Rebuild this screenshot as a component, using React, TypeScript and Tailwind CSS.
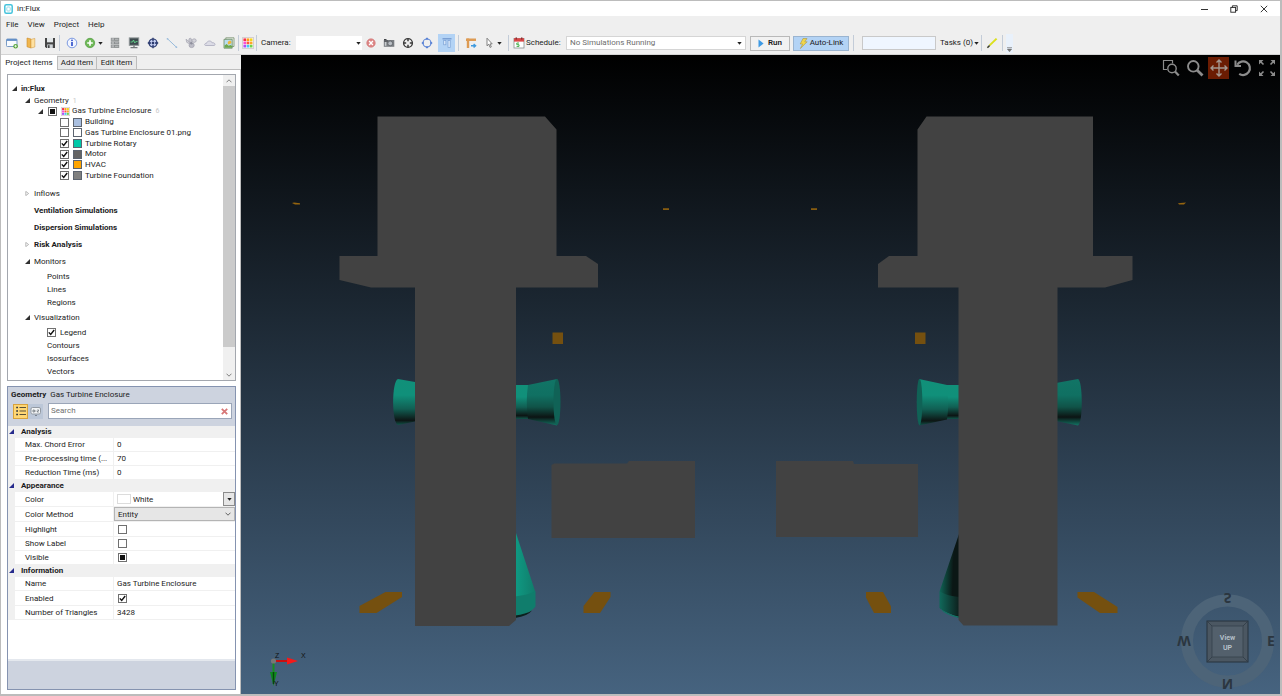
import { useEffect, useRef, type ReactNode } from "react";

function Glyph({ children, className = "" }: { children: ReactNode; className?: string }) {
  return (
    <svg viewBox="0 0 12 12" className={`size-3 shrink-0 ${className}`} fill="none" aria-hidden="true">
      {children}
    </svg>
  );
}

const buttonWidths = { narrow: "w-[17px]", normal: "w-[19px]", wide: "w-6 gap-0.5" };

function ToolButton({ label, children, size = "normal" }: { label: string; children: ReactNode; size?: keyof typeof buttonWidths }) {
  return (
    <button
      type="button"
      aria-label={label}
      className={`flex h-[18px] shrink-0 items-center justify-center ${buttonWidths[size]}`}
    >
      {children}
    </button>
  );
}

function Separator({ className = "" }: { className?: string }) {
  return <span className={`h-4 w-px shrink-0 bg-[#c3ccd8] ${className}`} />;
}

function Caret() {
  return (
    <svg viewBox="0 0 5 3" className="h-[3px] w-[5px] shrink-0" aria-hidden="true">
      <path d="M0.3 0H4.7L2.5 2.8Z" fill="#222" />
    </svg>
  );
}

const paletteColors = ["#f5304a", "#ff9c1a", "#f4d31c", "#fb4fd0", "#ff5a3c", "#ffa52a", "#b04ff5", "#43c8f5", "#6fd34a"];

function Palette() {
  return (
    <Glyph>
      <rect x="0.5" y="0.5" width="11" height="11" fill="#fff" stroke="#d5cfd2" />
      {paletteColors.map((color, i) => (
        <rect key={color} x={1.4 + (i % 3) * 3.2} y={1.4 + Math.floor(i / 3) * 3.2} width="2.7" height="2.7" fill={color} />
      ))}
    </Glyph>
  );
}

type CheckState = "on" | "off" | "mixed";

function Check({ id, label, state }: { id: string; label?: string; state: CheckState }) {
  const ref = useRef<HTMLInputElement>(null);
  useEffect(() => {
    if (ref.current) ref.current.indeterminate = state === "mixed";
  }, [state]);
  return (
    <span className="grid size-[9px] shrink-0">
      <input
        ref={ref}
        id={id}
        type="checkbox"
        aria-label={label}
        defaultChecked={state === "on"}
        className="peer col-start-1 row-start-1 m-0 size-[9px] appearance-none border border-[#707070] bg-white"
      />
      <svg viewBox="0 0 9 9" className="pointer-events-none col-start-1 row-start-1 hidden size-[9px] peer-checked:block" aria-hidden="true">
        <path d="M1.8 4.4L3.7 6.5L7.2 2" fill="none" stroke="#111" strokeWidth="1.4" />
      </svg>
      {state === "mixed" && (
        <svg viewBox="0 0 9 9" className="pointer-events-none col-start-1 row-start-1 size-[9px]" aria-hidden="true">
          <rect x="2" y="2" width="5" height="5" fill="#111" />
        </svg>
      )}
    </span>
  );
}

function TitleBar() {
  return (
    <header className="flex h-[15px] shrink-0 items-center bg-white pr-px pl-[3px]">
      <svg viewBox="0 0 9 10" className="h-2.5 w-[9px]" fill="none" aria-hidden="true">
        <rect x="0.8" y="0.8" width="7.4" height="8.4" rx="1.5" stroke="#45c3dc" strokeWidth="1.5" />
        <rect x="2.8" y="3" width="3.4" height="4" rx="1" stroke="#9adbe8" />
      </svg>
      <h1 className="ml-1">in:Flux</h1>
      <div className="ml-auto flex">
        <button type="button" aria-label="Minimize" className="flex h-[15px] w-[30px] items-center justify-center">
          <svg viewBox="0 0 8 8" className="size-2"><path d="M1 4.5H8" stroke="#333" /></svg>
        </button>
        <button type="button" aria-label="Restore" className="flex h-[15px] w-[30px] items-center justify-center">
          <svg viewBox="0 0 8 8" className="size-2" fill="none" stroke="#222" strokeWidth="0.9">
            <rect x="0.8" y="2.4" width="4.8" height="4.8" />
            <path d="M2.4 2.4V0.8H7.2V5.6H5.6" />
          </svg>
        </button>
        <button type="button" aria-label="Close" className="flex h-[15px] w-[30px] items-center justify-center">
          <svg viewBox="0 0 8 8" className="size-2"><path d="M0.8 0.8L7.2 7.2M7.2 0.8L0.8 7.2" stroke="#222" strokeWidth="0.9" /></svg>
        </button>
      </div>
    </header>
  );
}

function MenuBar() {
  return (
    <nav className="flex h-[17px] shrink-0 items-center gap-[9px] bg-[#efefef] pt-px pl-[5px]">
      {["File", "View", "Project", "Help"].map((item) => (
        <button key={item} type="button">{item}</button>
      ))}
    </nav>
  );
}

function Toolbar() {
  return (
    <div className="flex h-[22px] shrink-0 items-center border-b border-[#d4d4d4] bg-[#efefef] pb-px pl-px">
      <ToolButton label="New project">
        <Glyph>
          <rect x="0.5" y="2" width="10.5" height="7.5" rx="0.8" fill="#f8fbff" stroke="#7a9cc6" />
          <path d="M0.8 3H10.8" stroke="#4d7fc0" strokeWidth="1.6" />
          <circle cx="9.6" cy="9.2" r="2.3" fill="#57a639" />
          <path d="M9.6 7.9V10.5M8.3 9.2H10.9" stroke="#fff" strokeWidth="0.8" />
        </Glyph>
      </ToolButton>
      <ToolButton label="Open project">
        <Glyph>
          <path d="M2 1L6 2V11L2 9.8Z" fill="#f0b64e" stroke="#c98a28" strokeWidth="0.6" />
          <path d="M6 2.4L9.8 1.4V10L6 11Z" fill="#ffe1a0" stroke="#d3a04c" strokeWidth="0.6" />
        </Glyph>
      </ToolButton>
      <ToolButton label="Save project">
        <Glyph>
          <path d="M1 1H11V11H2.2L1 9.8Z" fill="#454545" />
          <rect x="3" y="1" width="6" height="4.3" fill="#e4e8ea" />
          <rect x="3.2" y="7.4" width="5.6" height="3.6" fill="#cfd4d8" />
          <rect x="4" y="8.2" width="1.6" height="2.8" fill="#454545" />
        </Glyph>
      </ToolButton>
      <Separator className="mr-0.5" />
      <ToolButton label="Information">
        <Glyph>
          <circle cx="6" cy="6" r="4.8" fill="#f1f5ff" stroke="#6e8fdc" strokeWidth="0.9" />
          <path d="M6 5V9" stroke="#2748c8" strokeWidth="1.6" />
          <circle cx="6" cy="3.3" r="0.9" fill="#2748c8" />
        </Glyph>
      </ToolButton>
      <ToolButton label="Add" size="wide">
        <Glyph>
          <circle cx="6" cy="6" r="4.7" fill="#6fb957" stroke="#4f9a3d" strokeWidth="0.7" />
          <path d="M6 3.2V8.8M3.2 6H8.8" stroke="#fff" strokeWidth="1.7" />
        </Glyph>
        <Caret />
      </ToolButton>
      <ToolButton label="Server">
        <Glyph>
          {[0.8, 4.3, 7.8].map((y) => (
            <g key={y}>
              <rect x="1.8" y={y} width="8.4" height="3.1" fill="#8b8f90" />
              <path d={`M2.6 ${y + 1}H5M2.6 ${y + 2}H5M6 ${y + 1.5}H9.4`} stroke="#d6d9da" strokeWidth="0.6" />
            </g>
          ))}
        </Glyph>
      </ToolButton>
      <ToolButton label="Monitor">
        <Glyph>
          <rect x="1.3" y="0.9" width="9.4" height="7.4" fill="#3e4a4e" stroke="#8d9496" />
          <path d="M2.5 5H4.5L5.5 3L6.8 6L7.8 4.6H9.6" stroke="#62d48a" strokeWidth="0.9" />
          <path d="M6 8.4V10.4M2.5 10.6H9.5" stroke="#74797b" strokeWidth="1.4" />
        </Glyph>
      </ToolButton>
      <ToolButton label="Probe">
        <Glyph>
          <circle cx="6" cy="6" r="4" fill="#c5cff2" stroke="#25356b" strokeWidth="1.2" />
          <path d="M6 0.8V4.2M6 7.8V11.2M0.8 6H4.2M7.8 6H11.2" stroke="#25356b" strokeWidth="1.3" />
          <circle cx="6" cy="6" r="1.2" fill="#25356b" />
        </Glyph>
      </ToolButton>
      <ToolButton label="Line">
        <Glyph>
          <path d="M1.5 1.8L10.4 10.2" stroke="#8db4d8" strokeWidth="0.9" />
          <circle cx="1.5" cy="1.8" r="0.9" fill="#9dbddd" />
          <circle cx="10.4" cy="10.2" r="0.9" fill="#9dbddd" />
        </Glyph>
      </ToolButton>
      <ToolButton label="Fan">
        <Glyph>
          <path d="M6.3 6.5L1 2.2L1.8 5.4L4.6 6.8Z" fill="#d4d4da" stroke="#a0a1ad" strokeWidth="0.7" />
          <ellipse cx="5.2" cy="3.4" rx="1.4" ry="2.2" fill="#c6c6ce" stroke="#a0a1ad" strokeWidth="0.7" />
          <ellipse cx="9.2" cy="3.6" rx="2" ry="1.8" fill="#d4d4da" stroke="#a0a1ad" strokeWidth="0.7" />
          <ellipse cx="6.6" cy="8.2" rx="2.6" ry="2.4" fill="#bcbcc6" stroke="#a0a1ad" strokeWidth="0.7" />
          <circle cx="6.4" cy="6.2" r="1.2" fill="#8e8f9c" />
        </Glyph>
      </ToolButton>
      <ToolButton label="Cloud">
        <Glyph>
          <path d="M1.5 8.5C0 8 0.6 6.2 2.5 6.3C3.2 3.4 7.3 3.2 8.2 5.8C10.6 5.2 12 7.8 10.3 8.5Z" fill="#dcdce6" stroke="#a9a9bd" strokeWidth="0.8" />
        </Glyph>
      </ToolButton>
      <ToolButton label="Picture">
        <Glyph>
          <path d="M2.8 0.8H11V9.5H2.8Z" fill="#e9f0e9" stroke="#79906e" strokeWidth="0.8" />
          <path d="M1 2.3H9.2V11.2H1Z" fill="#b9ddef" stroke="#6b8a5d" strokeWidth="0.8" />
          <path d="M1.5 8.4L3.6 7L5.6 8.8L7.5 8L9 9V10.8H1.5Z" fill="#6ea74a" />
          <path d="M7.6 3.6L8.6 5.2L7.6 6.8L5.2 7.4L4.6 5.8L5.6 4Z" fill="#f0b73c" />
        </Glyph>
      </ToolButton>
      <Separator />
      <ToolButton label="Colors" size="narrow"><Palette /></ToolButton>
      <Separator className="mr-1" />

      <label htmlFor="camera" className="w-[31px] shrink-0">Camera:</label>
      <div className="ml-1 grid w-[66px] shrink-0 items-center bg-white">
        <select id="camera" className="col-start-1 row-start-1 h-[14px] w-full appearance-none bg-transparent">
          <option> </option>
        </select>
        <span className="pointer-events-none col-start-1 row-start-1 mr-px justify-self-end"><Caret /></span>
      </div>
      <ToolButton label="Delete camera" size="narrow">
        <Glyph>
          <circle cx="6" cy="6" r="4.3" fill="#dc8585" stroke="#cf7070" strokeWidth="0.5" />
          <path d="M4.1 4.1L7.9 7.9M7.9 4.1L4.1 7.9" stroke="#fff" strokeWidth="1.4" />
        </Glyph>
      </ToolButton>
      <ToolButton label="Snapshot">
        <Glyph>
          <path d="M0.8 3H11.3V9.8H0.8Z" fill="#7a7e83" />
          <path d="M1 2.5H3.5M1 4H5" stroke="#44474a" />
          <circle cx="7.2" cy="6.4" r="2.4" fill="#b8bdc3" stroke="#55595e" strokeWidth="0.7" />
          <rect x="1.8" y="5" width="1.6" height="3.8" fill="#c9cdd0" />
        </Glyph>
      </ToolButton>
      <ToolButton label="Center">
        <Glyph>
          <circle cx="6" cy="6" r="4.4" stroke="#3c3c3c" strokeWidth="1.4" />
          <path d="M6 1.5V4.2M6 7.8V10.5M1.5 6H4.2M7.8 6H10.5" stroke="#3c3c3c" strokeWidth="1.5" />
        </Glyph>
      </ToolButton>
      <ToolButton label="Fit view">
        <Glyph>
          <circle cx="6" cy="6" r="4" stroke="#5d86d6" strokeWidth="1.1" />
          <path d="M6 0.3L7.6 2.6H4.4ZM6 11.7L7.6 9.4H4.4ZM0.3 6L2.6 4.4V7.6ZM11.7 6L9.4 4.4V7.6Z" fill="#4d79d2" />
        </Glyph>
      </ToolButton>
      <button type="button" aria-label="Align view" aria-pressed="true" className="ml-0.5 flex h-[18px] w-[17px] shrink-0 items-center justify-center bg-[#b3d3f5]">
        <Glyph>
          <path d="M1.5 1.8H10.5" stroke="#6c94cc" strokeWidth="1.2" />
          <rect x="2.7" y="3.6" width="2.2" height="4.2" fill="#d9e8fa" stroke="#7ba0d4" strokeWidth="0.7" />
          <rect x="7" y="3.6" width="2.2" height="6.8" fill="#d9e8fa" stroke="#7ba0d4" strokeWidth="0.7" />
        </Glyph>
      </button>
      <Separator className="mr-0.5 ml-[3px]" />
      <ToolButton label="Measure">
        <Glyph>
          <path d="M1 2.8H11M3 1.2V11" stroke="#dd9b54" strokeWidth="2.4" />
          <path d="M6 8.8H10M8.6 7L10.6 8.8L8.6 10.6" stroke="#3f9ade" strokeWidth="1.4" />
        </Glyph>
      </ToolButton>
      <ToolButton label="Select" size="wide">
        <Glyph>
          <path d="M4 1.2V8.8L5.8 7.2L7 10.4L8.3 9.9L7 6.9H9.2Z" fill="#fff" stroke="#666" strokeWidth="0.8" />
        </Glyph>
        <Caret />
      </ToolButton>
      <Separator className="mx-1" />

      <Glyph>
        <rect x="1" y="1.5" width="10" height="9.5" fill="#fff" stroke="#8a8f90" strokeWidth="0.8" />
        <rect x="1" y="1.2" width="10" height="3.4" fill="#d94747" />
        <path d="M3.2 0.3V2.5M8.8 0.3V2.5" stroke="#6c2020" />
        <path d="M6 6H3.8V7.7H6V9.4H3.6" stroke="#46b04c" />
      </Glyph>
      <label htmlFor="schedule" className="ml-px w-[35px] shrink-0">Schedule:</label>
      <div className="ml-[5px] grid w-[180px] items-center border border-[#d5d5d5] bg-white">
        <select id="schedule" className="col-start-1 row-start-1 h-3 w-full appearance-none bg-transparent pl-[3px] text-[#6d6d6d]">
          <option>No Simulations Running</option>
        </select>
        <span className="pointer-events-none col-start-1 row-start-1 mr-[3px] justify-self-end"><Caret /></span>
      </div>
      <button type="button" className="ml-1 flex h-[15px] w-10 shrink-0 items-center justify-center gap-1 border border-[#b9b9b9] bg-[#f2f2f2] font-semibold">
        <svg viewBox="0 0 6 9" className="h-[9px] w-1.5" aria-hidden="true"><path d="M0.5 0.5L5.6 4.5L0.5 8.5Z" fill="#3e9ae4" /></svg>
        Run
      </button>
      <button type="button" aria-pressed="true" className="ml-[3px] flex h-[15px] w-14 shrink-0 items-center justify-center gap-0.5 border border-[#9ab4d0] bg-[#b3d3f5] whitespace-nowrap">
        <svg viewBox="0 0 9 11" className="h-[11px] w-[9px]" aria-hidden="true">
          <path d="M4 0.5H8L5.8 3.8H8.2L1.4 10.5L3.6 6H1.2Z" fill="#f1d64a" stroke="#a9974a" strokeWidth="0.6" />
        </svg>
        Auto-Link
      </button>
      <Separator className="mr-2 ml-1" />
      <div role="progressbar" aria-label="Task progress" className="h-[14px] w-[74px] border border-[#c9c9c9] bg-[#eff6ff]" />
      <button type="button" className="ml-1 flex w-9 items-center gap-px whitespace-nowrap">Tasks (0)<Caret /></button>
      <Separator className="ml-[5px]" />
      <ToolButton label="Highlight">
        <Glyph>
          <path d="M10.6 1.6L3.6 8.4" stroke="#dbe01c" strokeWidth="2" />
          <path d="M3.6 8.4L1.4 10.8" stroke="#3c3f2a" strokeWidth="1.5" />
        </Glyph>
      </ToolButton>
      <Separator className="ml-px" />
      <button type="button" aria-label="More tools" className="ml-[3px] flex h-[19px] w-[7px] items-end justify-center bg-[#e9f1fb] pb-px">
        <svg viewBox="0 0 5 5" className="size-[5px]"><path d="M0 0.5H5M0.3 2H4.7L2.5 4.8Z" stroke="#777" strokeWidth="0.6" fill="#777" /></svg>
      </button>
    </div>
  );
}

function Twisty({ open, blue }: { open: boolean; blue?: boolean }) {
  return (
    <svg viewBox="0 0 5 5" className="size-[5px] shrink-0" aria-hidden="true">
      {open ? (
        <path d="M5 0V5H0Z" fill={blue ? "#262b8c" : "#303030"} />
      ) : (
        <path d="M0.8 0.4L3.6 2.5L0.8 4.6Z" fill="#fff" stroke="#9a9a9a" strokeWidth="0.7" />
      )}
    </svg>
  );
}

function Branch({ label, open, bold }: { label: string; open?: boolean; bold?: boolean }) {
  return (
    <li className={`flex h-[17px] items-center gap-1 pl-[17px] ${bold ? "font-bold" : ""}`}>
      {open === undefined ? <span className="w-[5px]" /> : <Twisty open={open} />}
      {label}
    </li>
  );
}

const parts: { name: string; state: CheckState; swatch: string }[] = [
  { name: "Building", state: "off", swatch: "bg-[#a9bfe0]" },
  { name: "Gas Turbine Enclosure 01.png", state: "off", swatch: "bg-white" },
  { name: "Turbine Rotary", state: "on", swatch: "bg-[#00c8a8]" },
  { name: "Motor", state: "on", swatch: "bg-[#646464]" },
  { name: "HVAC", state: "on", swatch: "bg-[#ffa500]" },
  { name: "Turbine Foundation", state: "on", swatch: "bg-[#808080]" },
];

function ProjectTree() {
  return (
    <div className="mr-1 ml-1.5 flex h-[307px] shrink-0 border border-[#a3a7ae] bg-white">
      <ul className="min-w-0 flex-1 overflow-hidden pt-[7px]">
        <li className="flex h-[13px] items-center gap-1 pl-1 font-bold"><Twisty open />in:Flux</li>
        <li className="flex h-[11px] items-center gap-1 pl-[17px]">
          <Twisty open />Geometry<span className="text-[7px] text-[#c8c8c8]">1</span>
        </li>
        <li>
          <ul className="flex h-[75px] flex-col">
            <li className="flex flex-1 items-center pl-[30px]">
              <Twisty open />
              <span className="ml-[5px]"><Check id="enclosure" state="mixed" /></span>
              <span className="mr-0.5 ml-1 flex [&>svg]:size-[9px]"><Palette /></span>
              <label htmlFor="enclosure">Gas Turbine Enclosure</label>
              <span className="ml-1 text-[7px] text-[#c8c8c8]">6</span>
            </li>
            {parts.map((part) => (
              <li key={part.name} className="flex flex-1 items-center pl-[52px]">
                <Check id={part.name} state={part.state} />
                <span className={`mr-[3px] ml-1 size-[9px] border border-[#5c6470] ${part.swatch}`} />
                <label htmlFor={part.name} className="whitespace-nowrap">{part.name}</label>
              </li>
            ))}
          </ul>
        </li>
        <li className="h-1" aria-hidden="true" />
        <Branch label="Inflows" open={false} />
        <Branch label="Ventilation Simulations" bold />
        <Branch label="Dispersion Simulations" bold />
        <Branch label="Risk Analysis" open={false} bold />
        <Branch label="Monitors" open />
        {["Points", "Lines", "Regions"].map((item) => (
          <li key={item} className="flex h-[13px] items-center pl-[39px]">{item}</li>
        ))}
        <Branch label="Visualization" open />
        <li className="flex h-[13px] items-center gap-1 pl-[39px]">
          <Check id="legend" state="on" />
          <label htmlFor="legend">Legend</label>
        </li>
        {["Contours", "Isosurfaces", "Vectors", "Streamlines"].map((item) => (
          <li key={item} className="flex h-[13px] items-center pl-[39px]">{item}</li>
        ))}
      </ul>
      <div className="flex w-3 shrink-0 flex-col bg-[#f0f0f0]">
        <button type="button" aria-label="Scroll up" className="flex h-[11px] items-center justify-center">
          <svg viewBox="0 0 6 4" className="h-1 w-1.5" fill="none"><path d="M0.5 3.3L3 0.8L5.5 3.3" stroke="#808080" /></svg>
        </button>
        <div className="flex-1 bg-[#cbcbcb]" />
        <div className="h-[22px]" />
        <button type="button" aria-label="Scroll down" className="flex h-[11px] items-center justify-center">
          <svg viewBox="0 0 6 4" className="h-1 w-1.5" fill="none"><path d="M0.5 0.7L3 3.2L5.5 0.7" stroke="#808080" /></svg>
        </button>
      </div>
    </div>
  );
}

function Section({ title }: { title: string }) {
  return (
    <tr className="h-3 bg-[#f0f0f0]">
      <td className="w-[7px] p-0 pb-0.5"><span className="flex justify-end pr-px"><Twisty open blue /></span></td>
      <th colSpan={2} scope="colgroup" className="p-0 pl-1.5 text-left leading-[12px] font-bold">{title}</th>
    </tr>
  );
}

function Property({ name, tall, children, flush }: { name: string; tall?: boolean; children: ReactNode; flush?: boolean }) {
  return (
    <tr className={tall ? "h-[15px]" : "h-[14px]"}>
      <td className="bg-[#f0f0f0] p-0" />
      <th scope="row" className="border-b border-[#f0f0f0] p-0 pl-2.5 text-left leading-[13px] font-normal whitespace-nowrap">{name}</th>
      <td className={`border-b border-l border-[#f0f0f0] p-0 leading-[13px] ${flush ? "" : "pl-[3px]"}`}>{children}</td>
    </tr>
  );
}

function PropertyPanel() {
  return (
    <section className="mt-[5px] mr-1 mb-1 ml-1.5 flex min-h-0 flex-1 flex-col border border-[#8593b0] bg-white">
      <div className="h-[39px] shrink-0 bg-[#cdd3df]">
        <h2 className="flex h-[15px] items-center gap-1 pl-[3px]"><b>Geometry</b>Gas Turbine Enclosure</h2>
        <div className="flex items-center pt-px pr-[3px] pl-[5px]">
          <button type="button" aria-label="Categorized" className="flex size-[15px] items-center justify-center border border-[#d8a23c] bg-[#ffd774]">
            <Glyph>
              <path d="M4.5 2.5H11M4.5 6H11M4.5 9.5H11" stroke="#59513a" strokeWidth="1.1" />
              <path d="M1.2 2.5H3M1.2 6H3M1.2 9.5H3" stroke="#34383f" strokeWidth="1.6" />
            </Glyph>
          </button>
          <button type="button" aria-label="Alphabetical" className="flex size-[15px] items-center justify-center bg-[#bcc7d8]">
            <Glyph>
              <rect x="1" y="2.5" width="9.5" height="6.5" rx="1.5" fill="#f2f4f6" stroke="#8b929b" strokeWidth="0.9" />
              <path d="M3 7V5H4.4V7ZM5.2 6H6.4M7.2 5H8.8L7.2 7H8.8M5 10.5H7" stroke="#5d646c" strokeWidth="0.7" />
            </Glyph>
          </button>
          <div className="ml-[5px] flex h-4 min-w-0 flex-1 items-center border border-[#9aa5b8] bg-white pr-[3px] pl-0.5">
            <input aria-label="Search properties" placeholder="Search" className="w-full min-w-0 bg-transparent outline-none placeholder:text-[#6f6f6f]" />
            <button type="button" aria-label="Clear search">
              <svg viewBox="0 0 7 7" className="size-[7px]"><path d="M0.8 0.8L6.2 6.2M6.2 0.8L0.8 6.2" stroke="#d77777" strokeWidth="1.8" /></svg>
            </button>
          </div>
        </div>
      </div>
      <div className="min-h-0 flex-1 overflow-hidden">
        <table className="w-full table-fixed border-separate border-spacing-0">
          <colgroup>
            <col className="w-[7px]" />
            <col className="w-[98px]" />
            <col />
          </colgroup>
          <tbody>
            <Section title="Analysis" />
            <Property name="Max. Chord Error">0</Property>
            <Property name="Pre-processing time (...">70</Property>
            <Property name="Reduction Time (ms)">0</Property>
            <Section title="Appearance" />
            <Property name="Color" tall>
              <span className="flex h-[14px] items-center">
                <span className="h-2.5 w-[14px] border border-[#dcdcdc] bg-white" />
                <span className="ml-0.5 flex-1">White</span>
                <button type="button" aria-label="Choose color" className="flex h-[14px] w-3 items-center justify-center border border-[#8c8c8c] bg-[#e6e6e6]"><Caret /></button>
              </span>
            </Property>
            <Property name="Color Method" tall flush>
              <span className="grid h-[14px] items-center border border-[#b4b4b4] bg-[#e6e6e6]">
                <select aria-label="Color Method" className="col-start-1 row-start-1 h-3 w-full appearance-none bg-transparent pl-[3px]">
                  <option>Entity</option>
                </select>
                <svg viewBox="0 0 6 4" className="pointer-events-none col-start-1 row-start-1 mr-[3px] h-1 w-1.5 justify-self-end" fill="none"><path d="M0.5 0.7L3 3.2L5.5 0.7" stroke="#555" strokeWidth="0.9" /></svg>
              </span>
            </Property>
            <Property name="Highlight" tall><span className="flex pl-px"><Check id="p-highlight" label="Highlight" state="off" /></span></Property>
            <Property name="Show Label"><span className="flex pl-px"><Check id="p-label" label="Show Label" state="off" /></span></Property>
            <Property name="Visible"><span className="flex pl-px"><Check id="p-visible" label="Visible" state="mixed" /></span></Property>
            <Section title="Information" />
            <Property name="Name">Gas Turbine Enclosure</Property>
            <Property name="Enabled" tall><span className="flex pl-px"><Check id="p-enabled" label="Enabled" state="on" /></span></Property>
            <Property name="Number of Triangles">3428</Property>
          </tbody>
        </table>
      </div>
      <div className="h-[30px] shrink-0 border-t-2 border-[#e4e8ee] bg-[#cdd3df]" />
    </section>
  );
}

function SidePanel() {
  return (
    <aside className="flex w-60 shrink-0 flex-col bg-white">
      <div role="tablist" className="flex h-[15px] shrink-0 items-end bg-[#efefef]">
        <button type="button" role="tab" aria-selected="true" className="h-[15px] w-14 bg-white whitespace-nowrap">Project Items</button>
        <button type="button" role="tab" aria-selected="false" className="h-[14px] w-10 border border-[#bdbdbd] bg-[#e9e9e9] whitespace-nowrap">Add Item</button>
        <button type="button" role="tab" aria-selected="false" className="h-[14px] w-10 border border-l-0 border-[#bdbdbd] bg-[#e9e9e9] whitespace-nowrap">Edit Item</button>
        <span className="flex-1 self-stretch border-b border-[#bdbdbd]" />
      </div>
      <div className="flex min-h-0 flex-1 flex-col border-r border-[#bdbdbd] pt-1">
        <ProjectTree />
        <PropertyPanel />
      </div>
    </aside>
  );
}

function Scene() {
  return (
    <svg viewBox="241 55 1039 639" preserveAspectRatio="xMidYMid slice" className="size-full" role="img" aria-label="Gas turbine enclosure seen from below">
      <defs>
        <linearGradient id="pipe" x1="0" y1="0" x2="0" y2="1">
          <stop offset="0" stopColor="#119079" />
          <stop offset="0.35" stopColor="#10907a" />
          <stop offset="0.65" stopColor="#115f53" />
          <stop offset="0.9" stopColor="#0d1514" />
          <stop offset="1" stopColor="#10554a" />
        </linearGradient>
        <linearGradient id="pipeDim" x1="0" y1="0" x2="0" y2="1">
          <stop offset="0" stopColor="#117566" />
          <stop offset="0.35" stopColor="#107062" />
          <stop offset="0.6" stopColor="#105348" />
          <stop offset="0.82" stopColor="#0c1413" />
          <stop offset="1" stopColor="#127565" />
        </linearGradient>
        <linearGradient id="coneDark" x1="0" y1="0" x2="1" y2="0.15">
          <stop offset="0" stopColor="#107060" />
          <stop offset="0.75" stopColor="#0b1715" />
        </linearGradient>
        <linearGradient id="bandDark" x1="0" y1="0" x2="1" y2="0">
          <stop offset="0" stopColor="#10685a" />
          <stop offset="1" stopColor="#0d201d" />
        </linearGradient>
        <linearGradient id="coneLight" x1="0" y1="0" x2="1" y2="0">
          <stop offset="0" stopColor="#0f9a83" />
          <stop offset="1" stopColor="#107d6b" />
        </linearGradient>
      </defs>

      <g fill="#75500f">
        <path d="M292 203L294 202.5L300 203.2V204.6H295Z" fill="#94640f" />
        <path d="M1178 203.2L1186 202.5L1184 204.6H1179Z" fill="#94640f" />
        <rect x="663" y="208.3" width="6" height="1.6" fill="#94640f" />
        <rect x="811" y="208.3" width="6" height="1.6" fill="#94640f" />
        <rect x="552.5" y="332.5" width="10.5" height="11.5" />
        <rect x="915" y="332.5" width="10.5" height="11.5" />
        <path d="M385.5 592H402V597L376.5 613H359.5V606Z" />
        <path d="M594.5 592H610.5V597L600 613H583.5V606Z" />
        <path d="M866 592H883L891 606.5V613H874L866 597.5Z" />
        <path d="M1077.5 592H1094L1117.5 607V613H1100L1077.5 597.5Z" />
      </g>

      <path d="M415 382L398 379C391.5 381 391.5 423 398 425L415 421.5Z" fill="url(#pipe)" />
      <rect x="515" y="385" width="13" height="34" fill="url(#pipe)" />
      <path d="M528 385L557 379V425.5L528 419Q525.5 402 528 385Z" fill="url(#pipeDim)" />
      <ellipse cx="557" cy="402" rx="3.5" ry="23.2" fill="#106256" />
      <rect x="947" y="385" width="12" height="34" fill="url(#pipe)" />
      <path d="M919 379L947 385Q949.5 402 947 419.5L919 425.5Z" fill="url(#pipe)" />
      <ellipse cx="919.5" cy="402" rx="2.8" ry="23.2" fill="#106256" />
      <path d="M1056 383L1078 379C1083 381 1083 423 1078 425.5L1056 421Z" fill="url(#pipeDim)" />
      <path d="M515 530L535 591V606C531 612 524 615 515 616Z" fill="url(#coneLight)" />
      <path d="M514 596.5C522 596 530 594 535.5 591V606.5C531 612 524 615 514 616Z" fill="#107d6c" />
      <path d="M515 615.5Q526 614 532 610.5Q528 616 515 618Z" fill="#0c211e" />
      <path d="M959 534L939.7 591V608L959 618Z" fill="url(#coneDark)" />
      <path d="M939.7 591.5Q948 596 959 597V616Q946 614 939.7 608Z" fill="url(#bandDark)" />
      <path d="M940 608.5Q948 614.5 959 616.5V618Q946 615.5 940 608.5Z" fill="#107565" />

      <g fill="#424242">
        <path d="M377.5 116.5H545L556.5 129.5V256H586L598 264V287.5H516V620L509 626H415V287.5H371L339.5 280V256H377.5Z" />
        <path d="M926.5 116.5H1093V256H1132.5V280L1105 287.5H1057.5V625.5H963.5L958.5 620V287.5H878V264L889 256H917.5V129.5Z" />
        <path d="M551.5 465L554 463.5H627L629 461H695V538H551.5Z" />
        <path d="M776 461H853L854 464H918V537H776Z" />
      </g>
    </svg>
  );
}

function ViewTools() {
  const base = "flex h-[22px] w-[21px] items-center justify-center";
  return (
    <div className="absolute top-0.5 right-[3px] flex gap-[3px]">
      <button type="button" aria-label="Zoom window" className={base}>
        <svg viewBox="0 0 18 18" className="size-[18px]" fill="none" stroke="#8c8c8c">
          <path d="M5 10.5H1.5V1.5H10.5V4.5" strokeWidth="1.2" />
          <circle cx="10" cy="9.5" r="4.2" strokeWidth="1.4" />
          <path d="M13 12.5L16.8 16.5" strokeWidth="2.2" />
        </svg>
      </button>
      <button type="button" aria-label="Zoom" className={base}>
        <svg viewBox="0 0 18 18" className="size-[18px]" fill="none" stroke="#8c8c8c">
          <circle cx="7.3" cy="7.3" r="5.3" strokeWidth="1.9" />
          <path d="M11.2 11.2L16.5 16.5" strokeWidth="2.8" />
        </svg>
      </button>
      <button type="button" aria-label="Pan" aria-pressed="true" className={`${base} bg-[#6b1c02]`}>
        <svg viewBox="0 0 18 18" className="size-[18px]" fill="none" stroke="#a39790" strokeWidth="1.4">
          <path d="M9 1V17M1 9H17M6.5 3.5L9 1L11.5 3.5M6.5 14.5L9 17L11.5 14.5M3.5 6.5L1 9L3.5 11.5M14.5 6.5L17 9L14.5 11.5" />
        </svg>
      </button>
      <button type="button" aria-label="Rotate" className={base}>
        <svg viewBox="0 0 18 18" className="size-[18px]" fill="none" stroke="#8c8c8c">
          <path d="M3.2 5.8A6.8 6.8 0 1 1 5.2 14.8" strokeWidth="2.2" />
          <path d="M1.5 1.5V7H7" strokeWidth="2" />
        </svg>
      </button>
      <button type="button" aria-label="Zoom extents" className={base}>
        <svg viewBox="0 0 18 18" className="size-[18px]" fill="#8c8c8c" stroke="#8c8c8c">
          <path d="M1 1H5.5L1 5.5ZM17 1H12.5L17 5.5ZM1 17H5.5L1 12.500ZM17 17H12.500L17 12.500Z" stroke="none" />
          <path d="M2 2L5.5 5.5M16 2L12.5 5.5M2 16L5.5 12.5M16 16L12.5 12.5" strokeWidth="1.6" />
        </svg>
      </button>
    </div>
  );
}

function AxisTriad() {
  return (
    <svg viewBox="0 0 40 40" className="absolute bottom-1 left-[27px] size-10" aria-label="Axes" role="img">
      <path d="M6 11H20" stroke="#c90f10" strokeWidth="2" />
      <path d="M19 7.5L30 11L19 14.5Z" fill="#f51919" />
      <path d="M5.5 11V25" stroke="#188f22" strokeWidth="2" />
      <path d="M2 22H9L5.5 36Z" fill="#0c8a1c" />
      <path d="M5.5 22V34" stroke="#0a4210" strokeWidth="1.4" />
      <circle cx="5.5" cy="11" r="2.6" fill="#777" />
      <g fill="#111" fontSize="7" fontFamily="Liberation Sans, sans-serif">
        <text x="7" y="8">Z</text>
        <text x="33" y="8">X</text>
        <text x="6" y="36">Y</text>
      </g>
    </svg>
  );
}

function ViewCube() {
  return (
    <svg viewBox="0 0 104 104" className="absolute right-0 bottom-0 size-[104px]" role="img" aria-label="View direction">
      <circle cx="51.5" cy="51" r="40.5" fill="none" stroke="#4d6478" strokeWidth="12" />
      <g fill="#2b3640" fontSize="14" fontFamily="Open Sans, sans-serif" fontWeight="bold" textAnchor="middle">
        <text transform="translate(51.5 3) scale(1 -1)">S</text>
        <text transform="translate(8 46) scale(1 -1)">W</text>
        <text transform="translate(95 46) scale(1 -1)">E</text>
        <text transform="translate(51.5 89) scale(1 -1)">N</text>
      </g>
      <rect x="31" y="31" width="41" height="41" fill="#4b5762" stroke="#27323c" />
      <rect x="36" y="36" width="31" height="31" fill="#53606c" stroke="#36424d" strokeWidth="0.8" />
      <path d="M31 31L36 36M72 31L67 36M31 72L36 67M72 72L67 67" stroke="#303b46" strokeWidth="0.8" />
      <g fill="#b9c4cc" fontSize="7" fontFamily="Roboto, sans-serif" fontWeight="600" textAnchor="middle">
        <text x="51.5" y="50">View</text>
        <text x="51.5" y="60">UP</text>
      </g>
    </svg>
  );
}

export default function App() {
  return (
    <div className="flex h-screen flex-col border-t border-r-2 border-b-2 border-l border-[#bcbcbc] bg-white font-['Roboto','Noto_Sans',sans-serif] text-[8px] leading-[10px] text-[#1c1c1c]">
      <TitleBar />
      <MenuBar />
      <Toolbar />
      <main className="flex min-h-0 flex-1">
        <SidePanel />
        <section aria-label="3D view" className="relative min-w-0 flex-1 bg-linear-to-b/srgb from-black to-[#46637f]">
          <Scene />
          <ViewTools />
          <AxisTriad />
          <ViewCube />
        </section>
      </main>
    </div>
  );
}
